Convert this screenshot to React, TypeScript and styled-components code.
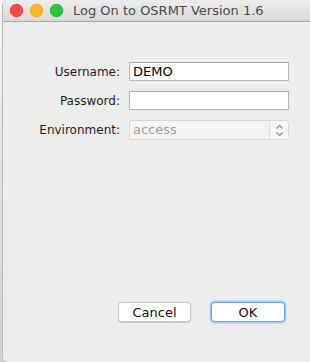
import styled, { createGlobalStyle } from "styled-components";

const Global = createGlobalStyle`
  html, body {
    margin: 0;
    padding: 0;
    background: #d9d9d9;
    overflow: hidden;
  }
  body {
    font-family: "DejaVu Sans", "Liberation Sans", sans-serif;
  }
`;

const Screen = styled.div`
  width: 310px;
  height: 362px;
  display: flex;
  background: linear-gradient(#f4f4f4, #cfcfcf);
`;

const Window = styled.div`
  margin-left: 2px;
  flex: 1;
  display: flex;
  flex-direction: column;
  background: #ececec;
  border-left: 1px solid #b9b9b9;
  border-top-left-radius: 5px;
  border-bottom-left-radius: 5px;
  overflow: hidden;
`;

const TitleBar = styled.div`
  height: 21px;
  display: flex;
  align-items: center;
  padding-left: 7px;
  gap: 7px;
  background: linear-gradient(#ececec, #d9d9d9);
  border-bottom: 1px solid #a9a9a9;
`;

const Light = styled.span<{ $color: string; $ring: string }>`
  width: 13px;
  height: 13px;
  border-radius: 50%;
  background: ${(p) => p.$color};
  box-shadow: inset 0 0 0 0.5px ${(p) => p.$ring};
`;

const Title = styled.div`
  margin-left: 3px;
  font-size: 13px;
  color: #4a4a4a;
  white-space: nowrap;
`;

const Content = styled.div`
  flex: 1;
  display: flex;
  flex-direction: column;
  padding: 40px 25px 40px 0;
`;

const Form = styled.div`
  display: grid;
  grid-template-columns: 117px 160px;
  column-gap: 9px;
  row-gap: 10px;
  align-items: center;
`;

const Label = styled.div`
  text-align: right;
  font-size: 12px;
  color: #1e1e1e;
  white-space: nowrap;
`;

const Field = styled.div`
  box-sizing: border-box;
  height: 19px;
  background: #fff;
  border: 1px solid #b6b6b6;
  border-top-color: #a8a8a8;
  padding-left: 3px;
  font-size: 13px;
  line-height: 17px;
  color: #000;
`;

const Combo = styled.div`
  height: 20px;
  box-sizing: border-box;
  display: flex;
  background: #f3f3f3;
  border: 1px solid #d6d6d6;
  border-radius: 0 4px 4px 0;
`;

const ComboText = styled.div`
  flex: 1;
  padding-left: 3px;
  font-size: 13px;
  line-height: 18px;
  color: #a0a0a0;
`;

const Stepper = styled.div`
  width: 18px;
  display: flex;
  align-items: center;
  justify-content: center;
  border-left: 1px solid #dcdcdc;
  background: #f7f7f7;
  border-radius: 0 3px 3px 0;
`;

const Buttons = styled.div`
  margin-top: auto;
  display: flex;
  justify-content: flex-end;
  gap: 20px;
`;

const Button = styled.div<{ $focus?: boolean }>`
  width: ${(p) => (p.$focus ? 74 : 73)}px;
  height: 20px;
  box-sizing: border-box;
  display: flex;
  align-items: center;
  justify-content: center;
  background: #fff;
  border-radius: 4px;
  font-size: 13px;
  color: #111;
  border: 1px solid ${(p) => (p.$focus ? "#6f9fe8" : "#c4c4c4")};
  box-shadow: ${(p) =>
    p.$focus ? "0 0 0 1.5px #a9c8f5" : "0 0.5px 1px rgba(0,0,0,0.15)"};
`;

function App() {
  return (
    <>
      <Global />
      <Screen>
        <Window>
          <TitleBar>
            <Light $color="#fd4a44" $ring="#e0352f" />
            <Light $color="#fdb524" $ring="#de9b15" />
            <Light $color="#28c73f" $ring="#1aab2c" />
            <Title>Log On to OSRMT Version 1.6</Title>
          </TitleBar>
          <Content>
            <Form>
              <Label>Username:</Label>
              <Field>DEMO</Field>
              <Label>Password:</Label>
              <Field />
              <Label>Environment:</Label>
              <Combo>
                <ComboText>access</ComboText>
                <Stepper>
                  <svg width="9" height="13" viewBox="0 0 9 13">
                    <path
                      d="M1.5 4.5 L4.5 1.5 L7.5 4.5 M1.5 8.5 L4.5 11.5 L7.5 8.5"
                      fill="none"
                      stroke="#8a8a8a"
                      strokeWidth="1.1"
                    />
                  </svg>
                </Stepper>
              </Combo>
            </Form>
            <Buttons>
              <Button>Cancel</Button>
              <Button $focus>OK</Button>
            </Buttons>
          </Content>
        </Window>
      </Screen>
    </>
  );
}

export default App;
